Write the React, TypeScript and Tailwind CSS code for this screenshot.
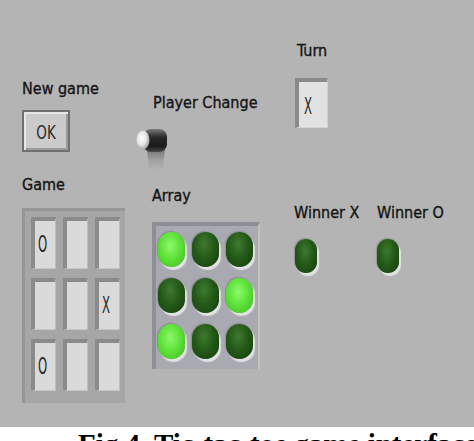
import React from "react";

const font = "font-['DejaVu_Sans_Condensed','DejaVu_Sans',sans-serif] font-stretch-condensed";
const label = `${font} text-[16px] leading-[20px] text-[#141414] [-webkit-text-stroke:0.35px_#141414] whitespace-nowrap`;

const board = ["O", "", "", "", "", "X", "O", "", ""];
const leds = [true, false, false, false, false, true, true, false, false];

function Cell({ v }: { v: string }) {
  return (
    <div className="w-[25px] h-[52px] border-t-[4px] border-l-[4px] border-r border-b border-t-[#8b8b8b] border-l-[#8b8b8b] border-r-[#bdbdbd] border-b-[#c6c6c6] bg-[#dadada] pl-[3px] pt-[5px]">
      <span className={`${font} inline-block origin-top scale-y-[1.7] text-[13px] leading-[16px] text-[#2a2a2a]`}>
        {v}
      </span>
    </div>
  );
}

function Led({ on, big = true }: { on: boolean; big?: boolean }) {
  const size = big ? "w-[27px] h-[35px]" : "w-[22px] h-[34px]";
  const fill = on
    ? "bg-[radial-gradient(ellipse_at_45%_40%,#8ef86c_0%,#5fe33a_45%,#3cb91c_100%)]"
    : "bg-[radial-gradient(ellipse_at_45%_35%,#3f7a30_0%,#245a18_45%,#143c0c_100%)]";
  return (
    <div
      className={`${size} rounded-full ${fill} shadow-[2px_3px_1px_rgba(236,236,236,0.85),-1px_-1px_1px_rgba(90,90,90,0.35)]`}
    />
  );
}

function Toggle() {
  return (
    <svg width="36" height="50" viewBox="0 0 36 50">
      <defs>
        <linearGradient id="sh" x1="0" y1="0" x2="0" y2="1">
          <stop offset="0" stopColor="#666" stopOpacity="0.9" />
          <stop offset="1" stopColor="#b4b4b4" stopOpacity="0" />
        </linearGradient>
        <linearGradient id="body" x1="0" y1="0" x2="0" y2="1">
          <stop offset="0" stopColor="#7a7a7a" />
          <stop offset="0.35" stopColor="#2a2a2a" />
          <stop offset="0.75" stopColor="#1a1a1a" />
          <stop offset="1" stopColor="#4a4a4a" />
        </linearGradient>
        <radialGradient id="knob" cx="0.4" cy="0.4" r="0.7">
          <stop offset="0" stopColor="#ffffff" />
          <stop offset="0.5" stopColor="#e6e6e6" />
          <stop offset="1" stopColor="#8c8c8c" />
        </radialGradient>
      </defs>
      <path d="M12 22 L30 22 L28 42 Q21 50 14 42 Z" fill="url(#sh)" />
      <rect x="8" y="2" width="24" height="23" rx="8" fill="url(#body)" />
      <ellipse cx="8" cy="13" rx="6.5" ry="9.5" fill="url(#knob)" />
    </svg>
  );
}

export default function App() {
  return (
    <div className="w-[474px] h-[441px] bg-white overflow-hidden">
      <div className="h-[427px] bg-[#b4b4b4] flex">
        {/* left column */}
        <div className="ml-[22px] w-[113px] pt-[79px] flex flex-col items-start">
          <div className={label}>New game</div>
          <button className="mt-[11px] w-[48px] h-[42px] border-[2px] border-[#707070] bg-[#cbcbcb] shadow-[inset_2px_2px_0_#e6e6e6,inset_-2px_-2px_0_#9a9a9a] flex items-start justify-center pt-[8px]">
            <span className={`${font} inline-block origin-top scale-y-[1.35] text-[15px] leading-[18px] text-[#2a2a2a]`}>
              OK
            </span>
          </button>
          <div className={`${label} mt-[23px]`}>Game</div>
          <div className="mt-[13px] w-[103px] h-[195px] bg-[#a6a6a6] border-t-[3px] border-l-[3px] border-t-[#969696] border-l-[#969696] pl-[6px] pt-[6px] grid grid-cols-[25px_25px_25px] gap-x-[7px] gap-y-[9px] content-start">
            {board.map((v, i) => (
              <Cell key={i} v={v} />
            ))}
          </div>
        </div>

        {/* middle column */}
        <div className="w-[160px] pt-[93px] flex flex-col items-start">
          <div className={`${label} ml-[18px]`}>Player Change</div>
          <div className="mt-[14px]">
            <Toggle />
          </div>
          <div className={`${label} ml-[17px] mt-[9px]`}>Array</div>
          <div className="ml-[17px] mt-[16px] w-[108px] h-[147px] bg-[#a9a9b1] border-t-[4px] border-l-[4px] border-r-[2px] border-t-[#8e8e96] border-l-[#8e8e96] border-r-[#c2c2c2] pl-[2px] pt-[6px] grid grid-cols-[27px_27px_27px] gap-x-[7px] gap-y-[11px] content-start">
            {leds.map((on, i) => (
              <Led key={i} on={on} />
            ))}
          </div>
        </div>

        {/* right column */}
        <div className="pt-[41px] flex flex-col items-start">
          <div className={`${label} ml-[2px]`}>Turn</div>
          <div className="mt-[17px] w-[33px] h-[50px] border-t-[4px] border-l-[4px] border-r border-b border-t-[#8a8a8a] border-l-[#8a8a8a] border-r-[#cfcfcf] border-b-[#d2d2d2] bg-[#e2e2e2] pl-[5px] pt-[6px]">
            <span className={`${font} inline-block origin-top scale-y-[1.7] text-[13px] leading-[16px] text-[#2a2a2a]`}>
              X
            </span>
          </div>
          <div className="mt-[75px] flex">
            <div className="w-[82px] flex flex-col items-start">
              <div className={`${label} -ml-[1px]`}>Winner X</div>
              <div className="mt-[16px]">
                <Led on={false} big={false} />
              </div>
            </div>
            <div className="w-[82px] flex flex-col items-start">
              <div className={label}>Winner O</div>
              <div className="mt-[16px]">
                <Led on={false} big={false} />
              </div>
            </div>
          </div>
        </div>
      </div>
      <div className="pt-[3px] pl-[78px] whitespace-nowrap font-['Liberation_Serif',serif] font-bold text-[29px] leading-[29px] text-black">
        Fig 4. Tic-tac-toe game interface
      </div>
    </div>
  );
}
